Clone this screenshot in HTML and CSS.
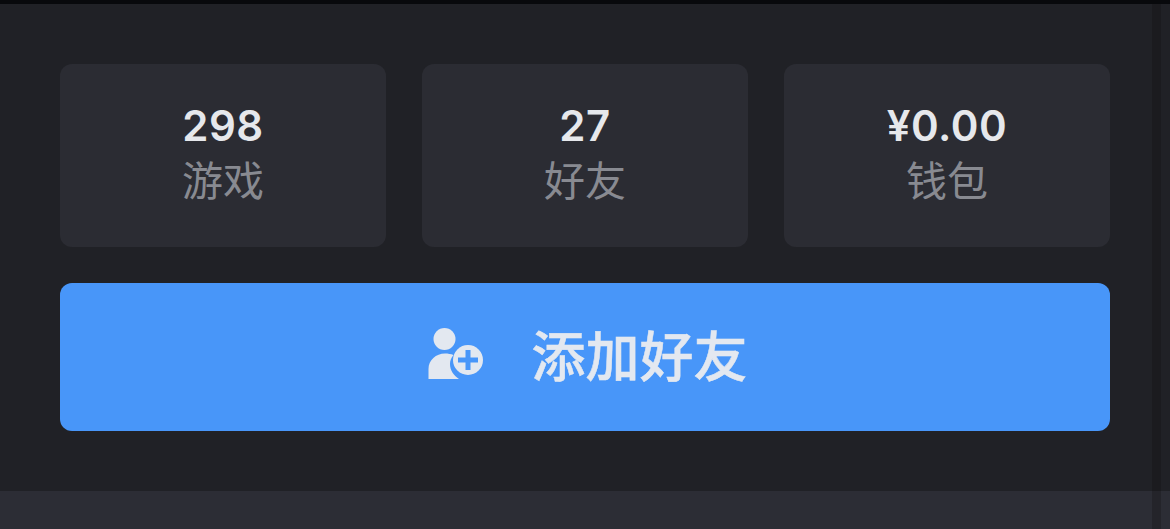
FILE: index.html
```html
<!DOCTYPE html>
<html lang="zh-CN">
<head>
<meta charset="utf-8">
<title>添加好友</title>
<link rel="stylesheet" href="styles.css">
</head>
<body>
<div class="page">
  <div class="topbar"></div>
  <main class="panel">
    <div class="stats">
      <div class="stat"><div class="value">298</div><div class="label">游戏</div></div>
      <div class="stat"><div class="value">27</div><div class="label">好友</div></div>
      <div class="stat"><div class="value">¥0.00</div><div class="label">钱包</div></div>
    </div>
    <button class="add" type="button">
      <svg class="icon" viewBox="0 0 56 52" aria-hidden="true">
        <circle cx="16.500" cy="11" r="11" fill="#e3e8f0"/>
        <path d="M0.500 51V41C0.500 32 8 25.500 17 25.500C20 25.500 23 26 25.500 27C23 30 22 33 22 36C22 42 25.500 47.500 31 51Z" fill="#e3e8f0"/>
        <circle cx="40" cy="32" r="15" fill="#e3e8f0"/>
        <path d="M40 22V42M30 32H50" stroke="#4896f9" stroke-width="5" fill="none"/>
      </svg>
      <span class="add-text">添加好友</span>
    </button>
  </main>
  <div class="footer"></div>
  <div class="scrollbar"></div>
</div>
</body>
</html>
```
FILE: styles.css
```css
html, body {
  margin: 0;
  height: 100%;
  background: #202126;
}
.page {
  position: relative;
  height: 529px;
  overflow: hidden;
  display: flex;
  flex-direction: column;
  font-family: "Inter", "Noto Sans CJK SC", sans-serif;
}
.topbar {
  height: 4px;
  background: #08090c;
}
.panel {
  flex: 1;
  box-sizing: border-box;
  padding: 60px 60px 0;
  display: flex;
  flex-direction: column;
  gap: 36px;
  background: #202126;
}
.stats {
  display: flex;
  gap: 36px;
}
.stat {
  flex: 1;
  height: 183px;
  border-radius: 12px;
  background: #2b2c33;
  display: flex;
  flex-direction: column;
  align-items: center;
  padding-bottom: 5px;
  box-sizing: border-box;
  justify-content: center;
}
.value {
  font-size: 42px;
  line-height: 51px;
  font-weight: 600;
  letter-spacing: 0.5px;
  color: #e6e8ec;
}
.label {
  font-family: "Noto Sans CJK SC", sans-serif;
  font-size: 41px;
  line-height: 55px;
  color: #888a91;
}
.add {
  height: 148px;
  border: 0;
  padding: 0 0 6px 5px;
  border-radius: 12px;
  background: #4896f9;
  display: flex;
  align-items: center;
  justify-content: center;
  gap: 48px;
  font-family: inherit;
}
.icon {
  width: 56px;
  height: 52px;
}
.add-text {
  font-family: "Noto Sans CJK SC", sans-serif;
  font-size: 54px;
  font-weight: 500;
  -webkit-text-stroke: 0.5px #e3e8f0;
  line-height: 70px;
  color: #e3e8f0;
}
.footer {
  height: 38px;
  background: #2c2d35;
}
.scrollbar {
  position: absolute;
  top: 4px;
  bottom: 0;
  left: 1152px;
  width: 9px;
  background: rgba(10, 10, 12, 0.25);
}
```
